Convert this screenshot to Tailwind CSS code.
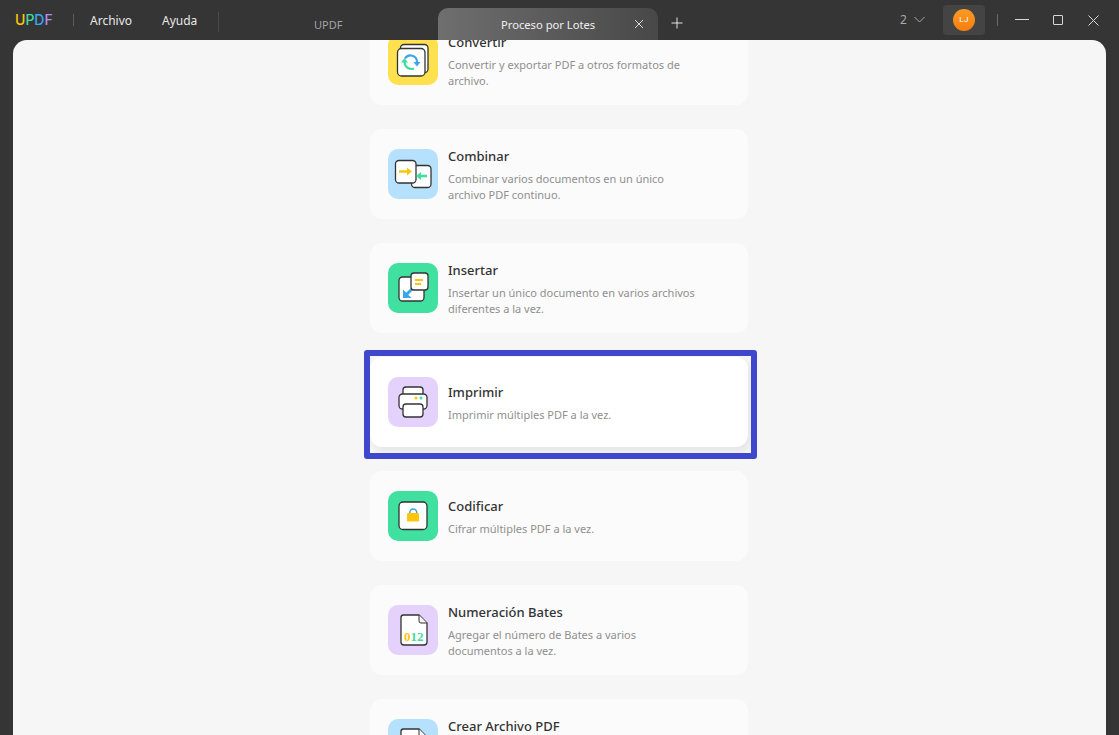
<!DOCTYPE html>
<html lang="es">
<head>
<meta charset="utf-8">
<script src="https://cdn.jsdelivr.net/npm/@tailwindcss/browser@4"></script>
</head>
<body class="m-0 bg-[#353535] font-['Noto_Sans','Open_Sans',sans-serif]">
<div class="relative w-[1119px] h-[735px] overflow-hidden bg-[#353535] flex flex-col">
  <!-- Title bar -->
  <header class="h-[40px] shrink-0 flex items-start text-[#e8e8e8]">
    <div class="ml-[15px] mt-[12px] w-[38px] h-[16px] flex text-[14px] leading-[16px] font-medium font-['Inter',sans-serif]">
      <span class="text-[#fdc60a]">U</span><span class="text-[#3fdd9e]">P</span><span class="text-[#3aa6ee]">D</span><span class="text-[#b78cf0]">F</span>
    </div>
    <div class="ml-[20px] mt-[14px] w-px h-[12px] bg-[#5c5c5c]"></div>
    <span class="ml-[16px] mt-[12px] w-[43px] text-[12px] leading-[18px]">Archivo</span>
    <span class="ml-[29px] mt-[12px] w-[36px] text-[12px] leading-[18px]">Ayuda</span>
    <div class="ml-[20px] mt-[12px] w-px h-[20px] bg-[#4a4a4a]"></div>
    <span class="ml-[95px] mt-[16px] w-[29px] text-[11px] leading-[17px] text-[#a4a4a4]">UPDF</span>
    <div class="ml-[95px] mt-[8px] w-[220px] h-[32px] rounded-t-[10px] bg-gradient-to-r from-[#6f6f6f] to-[#484848] flex items-center relative">
      <span class="ml-[63px] text-[11.2px] text-[#f0f0f0] leading-[17px] mt-[1px]">Proceso por Lotes</span>
      <svg class="absolute left-[196px] top-[11px]" width="10" height="10" viewBox="0 0 10 10" fill="none" stroke="#dcdcdc" stroke-width="1"><path d="M1 1l8 8M9 1l-8 8"/></svg>
    </div>
    <svg class="ml-[13px] mt-[17px]" width="12" height="12" viewBox="0 0 12 12" fill="none" stroke="#e4e4e4" stroke-width="1"><path d="M6 0.5v11M0.5 6h11"/></svg>
    <span class="ml-[217px] mt-[11px] w-[7px] text-[12px] leading-[18px] text-[#a8a8a8]">2</span>
    <svg class="ml-[7px] mt-[16px]" width="11" height="7" viewBox="0 0 11 7" fill="none" stroke="#a8a8a8" stroke-width="1"><path d="M0.5 1l5 5 5-5"/></svg>
    <div class="ml-[18px] mt-[5px] w-[42px] h-[30px] rounded-[4px] bg-[#444444] flex items-center justify-center">
      <div class="w-[22px] h-[22px] rounded-full bg-gradient-to-b from-[#fb9a26] to-[#f47f0c] flex items-center justify-center text-[8px] leading-none text-white font-['Roboto',sans-serif] tracking-[0.5px]">LJ</div>
    </div>
    <div class="ml-[12px] mt-[14px] w-px h-[12px] bg-[#6a6a6a]"></div>
    <div class="ml-[17px] mt-[19px] w-[14px] h-px bg-[#d8d8d8]"></div>
    <div class="ml-[24px] mt-[15px] w-[10px] h-[10px] border border-[#d8d8d8] rounded-[1px]"></div>
    <svg class="ml-[24px] mt-[14px]" width="13" height="13" viewBox="0 0 13 13" fill="none" stroke="#d8d8d8" stroke-width="1"><path d="M1.5 1.5l10 10M11.5 1.5l-10 10"/></svg>
  </header>

  <!-- Main panel -->
  <main class="ml-[13px] w-[1093px] flex-1 min-h-0 bg-[#f6f6f6] rounded-t-[14px] overflow-hidden">
    <div class="mt-[-25px] ml-[357px] w-[378px] flex flex-col gap-[24px]">

      <section class="h-[90px] shrink-0 rounded-[12px] bg-[#fbfbfb] flex items-center pl-[18px]">
        <div class="w-[50px] h-[50px] rounded-[10px] bg-[#ffe04f] shrink-0 flex items-center justify-center">
          <svg width="40" height="40" viewBox="0 0 40 40" fill="none">
            <rect x="7.500" y="4.500" width="27.500" height="28" rx="3.500" fill="#fff" stroke="#333" stroke-width="1.300"/>
            <rect x="4.500" y="8.500" width="27.500" height="27.500" rx="4" fill="#fff" stroke="#333" stroke-width="1.300"/>
            <path d="M12 18.500A6.500 6.500 0 0 1 24 22" stroke="#3aa6ee" stroke-width="2.200"/>
            <path d="M20.500 22h7l-3.500 4.500z" fill="#3aa6ee"/>
            <path d="M11.500 22A7 7 0 0 0 21 28.500" stroke="#3fdd9e" stroke-width="2.200"/>
            <path d="M8 22.500h7l-3.500-4.500z" fill="#3fdd9e"/>
          </svg>
        </div>
        <div class="ml-[10px] w-[256px]">
          <h3 class="text-[13px] leading-[20px] font-medium text-[#333333]">Convertir</h3>
          <p class="mt-[5px] text-[11px] leading-[16px] text-[#8f8f8f]">Convertir y exportar PDF a otros formatos de archivo.</p>
        </div>
      </section>

      <section class="h-[90px] shrink-0 rounded-[12px] bg-[#fbfbfb] flex items-center pl-[18px]">
        <div class="w-[50px] h-[50px] rounded-[10px] bg-[#b5e1fd] shrink-0 flex items-center justify-center">
          <svg width="40" height="40" viewBox="0 0 40 40" fill="none">
            <rect x="18.500" y="11.500" width="19.500" height="22" rx="3.500" fill="#fff" stroke="#333" stroke-width="1.300"/>
            <rect x="2.500" y="6.500" width="20.500" height="22.500" rx="3.500" fill="#fff" stroke="#333" stroke-width="1.300"/>
            <path d="M6 17.500h9" stroke="#fdc60a" stroke-width="2.400"/><path d="M14 13.500l5 4-5 4z" fill="#fdc60a"/>
            <path d="M34 22h-7" stroke="#3fdd9e" stroke-width="2.400"/><path d="M28 18l-5 4 5 4z" fill="#3fdd9e"/>
          </svg>
        </div>
        <div class="ml-[10px] w-[250px]">
          <h3 class="text-[13px] leading-[20px] font-medium text-[#333333]">Combinar</h3>
          <p class="mt-[5px] text-[11px] leading-[16px] text-[#8f8f8f]">Combinar varios documentos en un único archivo PDF continuo.</p>
        </div>
      </section>

      <section class="h-[90px] shrink-0 rounded-[12px] bg-[#fbfbfb] flex items-center pl-[18px]">
        <div class="w-[50px] h-[50px] rounded-[10px] bg-[#3fe0a0] shrink-0 flex items-center justify-center">
          <svg width="40" height="40" viewBox="0 0 40 40" fill="none">
            <rect x="6" y="9" width="25" height="24" rx="3.500" fill="#fff" stroke="#333" stroke-width="1.300"/>
            <path d="M19 21L13 27" stroke="#3aa6ee" stroke-width="3"/><path d="M10 21.500V30h8.500z" fill="#3aa6ee"/>
            <rect x="18" y="5" width="17" height="17" rx="3" fill="#fff" stroke="#333" stroke-width="1.300"/>
            <path d="M22 12h8M22 16h6" stroke="#fdc60a" stroke-width="1.800"/>
          </svg>
        </div>
        <div class="ml-[10px] w-[256px]">
          <h3 class="text-[13px] leading-[20px] font-medium text-[#333333]">Insertar</h3>
          <p class="mt-[5px] text-[11px] leading-[16px] text-[#8f8f8f]">Insertar un único documento en varios archivos diferentes a la vez.</p>
        </div>
      </section>

      <section class="h-[90px] shrink-0 rounded-[12px] bg-white shadow-[3px_4px_8px_rgba(0,0,0,0.08)] flex items-center pl-[18px]">
        <div class="w-[50px] h-[50px] rounded-[10px] bg-[#e4d2fd] shrink-0 flex items-center justify-center">
          <svg width="40" height="40" viewBox="0 0 40 40" fill="none" stroke="#333" stroke-width="1.300">
            <rect x="10" y="5" width="20" height="12" rx="3" fill="#fff"/>
            <rect x="6" y="12" width="28" height="15" rx="3.500" fill="#fff"/>
            <rect x="10" y="22" width="20" height="13" rx="3" fill="#fff"/>
            <circle cx="23" cy="16" r="1.500" fill="#fdc60a" stroke="none"/><circle cx="28" cy="16" r="1.500" fill="#3fdd9e" stroke="none"/>
          </svg>
        </div>
        <div class="ml-[10px] w-[256px]">
          <h3 class="text-[13px] leading-[20px] font-medium text-[#333333]">Imprimir</h3>
          <p class="mt-[5px] text-[11px] leading-[16px] text-[#8f8f8f]">Imprimir múltiples PDF a la vez.</p>
        </div>
      </section>

      <section class="h-[90px] shrink-0 rounded-[12px] bg-[#fbfbfb] flex items-center pl-[18px]">
        <div class="w-[50px] h-[50px] rounded-[10px] bg-[#3fe0a0] shrink-0 flex items-center justify-center">
          <svg width="40" height="40" viewBox="0 0 40 40" fill="none">
            <rect x="6" y="6" width="28" height="27.500" rx="4" fill="#fff" stroke="#333" stroke-width="1.300"/>
            <path d="M16.800 18v-1.500a3.500 3.500 0 0 1 7 0V18" stroke="#3aa6ee" stroke-width="1.500"/>
            <rect x="14" y="17" width="12" height="8.500" rx="1.200" fill="#fdc60a"/>
          </svg>
        </div>
        <div class="ml-[10px] w-[256px]">
          <h3 class="text-[13px] leading-[20px] font-medium text-[#333333]">Codificar</h3>
          <p class="mt-[5px] text-[11px] leading-[16px] text-[#8f8f8f]">Cifrar múltiples PDF a la vez.</p>
        </div>
      </section>

      <section class="h-[90px] shrink-0 rounded-[12px] bg-[#fbfbfb] flex items-center pl-[18px]">
        <div class="w-[50px] h-[50px] rounded-[10px] bg-[#e4d2fd] shrink-0 flex items-center justify-center relative">
          <svg width="40" height="40" viewBox="0 0 40 40" fill="none">
            <path d="M10.500 5H26l8 8v19a3 3 0 0 1-3 3H11a3 3 0 0 1-3-3V7.500A2.500 2.500 0 0 1 10.500 5z" fill="#fff" stroke="#333" stroke-width="1.300"/>
            <path d="M26 5v6a2 2 0 0 0 2 2h6" fill="#f4f4f4" stroke="#333" stroke-width="1"/>
          </svg>
          <span class="absolute left-[16px] top-[26px] text-[13px] leading-[12px] font-bold font-['Liberation_Serif',serif]"><span class="text-[#fdc60a]">0</span><span class="text-[#3fdd9e]">12</span></span>
        </div>
        <div class="ml-[10px] w-[230px]">
          <h3 class="text-[13px] leading-[20px] font-medium text-[#333333]">Numeración Bates</h3>
          <p class="mt-[5px] text-[11px] leading-[16px] text-[#8f8f8f]">Agregar el número de Bates a varios documentos a la vez.</p>
        </div>
      </section>

      <section class="h-[90px] shrink-0 rounded-[12px] bg-[#fbfbfb] flex items-center pl-[18px]">
        <div class="w-[50px] h-[50px] rounded-[10px] bg-[#b5e1fd] shrink-0 flex items-center justify-center">
          <svg width="40" height="40" viewBox="0 0 40 40" fill="none">
            <path d="M10.500 5H26l8 8v19a3 3 0 0 1-3 3H11a3 3 0 0 1-3-3V7.500A2.500 2.500 0 0 1 10.500 5z" fill="#fff" stroke="#333" stroke-width="1.300"/>
            <path d="M26 5v6a2 2 0 0 0 2 2h6" fill="#f4f4f4" stroke="#333" stroke-width="1"/>
          </svg>
        </div>
        <div class="ml-[10px] w-[256px]">
          <h3 class="text-[13px] leading-[20px] font-medium text-[#333333]">Crear Archivo PDF</h3>
          <p class="mt-[5px] min-h-[32px] text-[11px] leading-[16px] text-[#8f8f8f]"></p>
        </div>
      </section>
    </div>
  </main>

  <!-- Highlight annotation over content -->
  <div class="absolute left-[364px] top-[350px] w-[393px] h-[109px] border-[6px] border-[#3f48cc] rounded-[3px] pointer-events-none"></div>
</div>
</body>
</html>
